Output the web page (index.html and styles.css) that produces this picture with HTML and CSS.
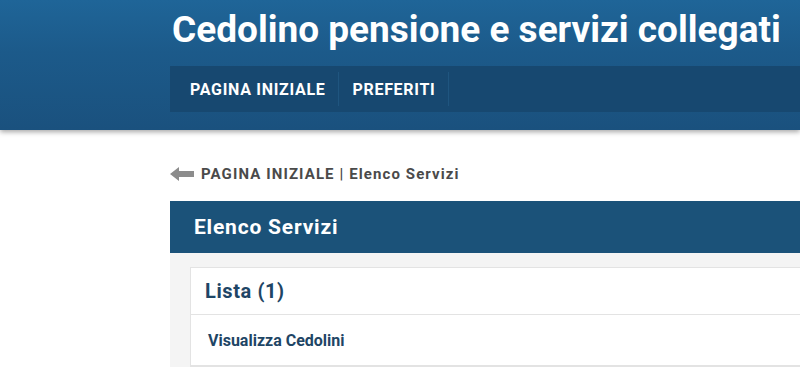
FILE: index.html
```html
<!DOCTYPE html>
<html lang="it">
<head>
<meta charset="utf-8">
<title>Cedolino pensione e servizi collegati</title>
<link rel="stylesheet" href="styles.css">
</head>
<body>
<header class="header">
  <div class="wrap">
    <h1 class="title">Cedolino pensione e servizi collegati</h1>
    <nav class="nav">
      <a class="nav-item" href="#">PAGINA INIZIALE</a>
      <a class="nav-item" href="#">PREFERITI</a>
    </nav>
  </div>
</header>
<main class="wrap main">
  <div class="breadcrumb">
    <svg class="back" width="24" height="14" viewBox="0 0 24 14"><polygon points="0,7 9,0 9,4 24,4 24,10 9,10 9,14" fill="#8c8c8c"/></svg>
    <span>PAGINA INIZIALE | </span><span class="crumb">Elenco Servizi</span>
  </div>
  <section class="panel">
    <h2 class="panel-head">Elenco Servizi</h2>
    <div class="panel-body">
      <div class="list">
        <div class="list-head">Lista (1)</div>
        <a class="list-row" href="#">Visualizza Cedolini</a>
      </div>
    </div>
  </section>
</main>
</body>
</html>
```
FILE: styles.css
```css
html, body {
  margin: 0;
  padding: 0;
  background: #fff;
  overflow: hidden;
  font-family: Roboto, "Noto Sans", sans-serif;
}
.wrap {
  padding-left: 170px;
}
.header {
  height: 130px;
  background: linear-gradient(to bottom, #1f6598 0%, #1c5a8a 40%, #1a517e 100%);
  box-shadow: 0 2px 5px rgba(0,0,0,0.35);
  position: relative;
}
.title {
  margin: 0;
  padding: 6px 0 0 2px;
  height: 66px;
  box-sizing: border-box;
  color: #fff;
  font-size: 37px;
  font-weight: 700;
  letter-spacing: 0;
  white-space: nowrap;
  line-height: 48px;
}
.nav {
  display: flex;
  height: 46px;
  background: #174870;
}
.nav-item {
  display: flex;
  align-items: center;
  padding: 0 13px 0 20px;
  color: #fff;
  text-decoration: none;
  font-size: 16px;
  font-weight: 700;
  letter-spacing: 0.7px;
  border-right: 1px solid #1f557f;
  margin: 6px 0;
}
.nav-item + .nav-item {
  padding-left: 13px;
}
.main {
  padding-top: 34px;
}
.breadcrumb {
  display: flex;
  align-items: center;
  height: 20px;
  color: #4a4a4a;
  font-size: 15px;
  font-weight: 700;
  letter-spacing: 1.1px;
  white-space: pre;
}
.back {
  margin-right: 7px;
}
.crumb {
  font-weight: 700;
}
.panel {
  margin-top: 17px;
}
.panel-head {
  margin: 0;
  height: 52px;
  display: flex;
  align-items: center;
  padding-left: 24px;
  background: #1b5279;
  color: #fff;
  font-size: 21px;
  font-weight: 700;
  letter-spacing: 0.8px;
}
.panel-body {
  background: #f4f4f4;
  padding: 14px 0 0 20px;
}
.list {
  background: #fff;
  border: 1px solid #e3e3e3;
  border-right: 0;
}
.list-head {
  height: 46px;
  display: flex;
  align-items: center;
  padding-left: 14px;
  color: #1e4565;
  font-size: 20px;
  font-weight: 700;
  letter-spacing: 0.6px;
  border-bottom: 1px solid #e3e3e3;
}
.list-row {
  height: 50px;
  display: flex;
  align-items: center;
  padding-left: 17px;
  color: #1e4565;
  font-size: 16px;
  font-weight: 700;
  letter-spacing: 0;
  text-decoration: none;
  border-bottom: 1px solid #e3e3e3;
}
```
